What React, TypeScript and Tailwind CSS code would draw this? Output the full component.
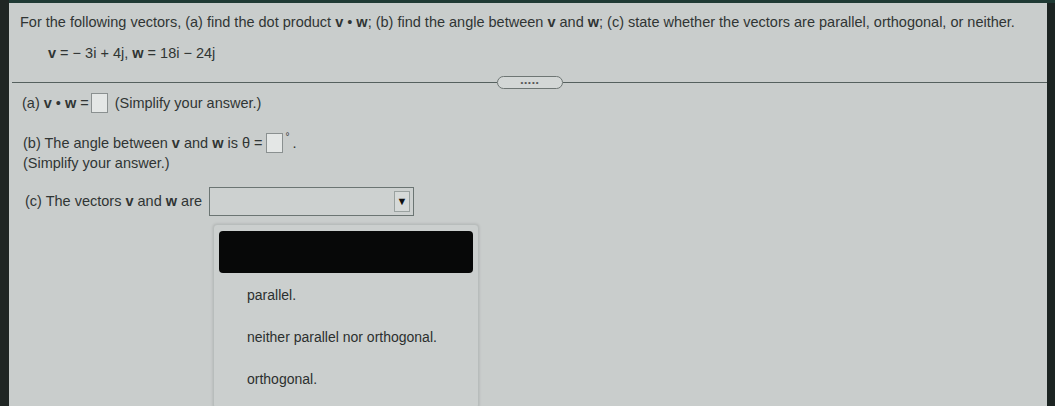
import React from 'react'

const font = { fontFamily: '"Liberation Sans", Arial, sans-serif' }

function AnswerBox({ className = '' }: { className?: string }) {
  return <span className={`inline-block w-[17px] h-[20px] border border-[#8a9090] bg-[#e4e7e6] align-middle ${className}`} />
}

export default function App() {
  const options = ['parallel.', 'neither parallel nor orthogonal.', 'orthogonal.']
  return (
    <div className="w-[1055px] h-[406px] overflow-hidden bg-[#1c2422] flex" style={font}>
      {/* left bezel */}
      <div className="w-[9px] shrink-0 bg-[#202624]" />
      <div className="flex-1 flex flex-col">
        <div className="h-[3px] bg-[#1f3a34]" />
        <div className="relative flex-1 bg-[#c9cdcc] text-[#303534] text-[14.5px] mr-[8px]">
          <div className="pl-[11px] pt-[11px] leading-[16px] whitespace-nowrap">
            For the following vectors, (a) find the dot product <b>v</b> • <b>w</b>; (b) find the angle between <b>v</b> and <b>w</b>; (c) state whether the vectors are parallel, orthogonal, or neither.
          </div>
          <div className="pl-[39px] pt-[15px] leading-[16px]">
            <b>v</b> = − 3i + 4j, <b>w</b> = 18i − 24j
          </div>

          {/* divider with pill */}
          <div className="flex items-center mt-[15px] pl-[3px]">
            <div className="w-[485px] h-[1px] bg-[#55605e]" />
            <div className="w-[66px] h-[13px] rounded-full border border-[#6e7674] bg-[#d3d7d6] flex items-center justify-center text-[8px] leading-none tracking-[1px] text-[#555]">
              •••••
            </div>
            <div className="flex-1 h-[1px] bg-[#55605e]" />
          </div>

          <div className="pl-[13px] pt-[4px] flex items-center gap-[2px] leading-[16px]">
            <span>(a) <b>v</b> • <b>w</b> =</span>
            <AnswerBox />
            <span className="ml-[5px]">(Simplify your answer.)</span>
          </div>

          <div className="pl-[14px] pt-[20px] leading-[18px]">
            <div className="flex items-center gap-[3px]">
              <span>(b) The angle between <b>v</b> and <b>w</b> is θ =</span>
              <AnswerBox />
              <span className="self-start text-[10px] leading-[10px] -mt-[1px]">°</span>
              <span>.</span>
            </div>
            <div className="mt-[1px]">(Simplify your answer.)</div>
          </div>

          <div className="pl-[16px] pt-[15px] flex items-center gap-[7px]">
            <span>(c) The vectors <b>v</b> and <b>w</b> are</span>
            <div className="w-[205px] h-[29px] border border-[#6b7573] bg-[#cdd1d0] flex items-center justify-end pr-[3px]">
              <div className="w-[16px] h-[21px] bg-[#d6dad9] border border-[#9aa2a0] flex items-center justify-center text-[11px] text-[#111]">▼</div>
            </div>
          </div>

          {/* dropdown panel */}
          <div className="absolute left-[204px] top-[221px] w-[266px] h-[185px] rounded-[4px] border border-[#b8bdbc] bg-[#cbcfce] shadow-[0_0_3px_rgba(0,0,0,0.15)] flex flex-col">
            <div className="mx-[5px] mt-[6px] h-[42px] rounded-[4px] bg-[#070808]" />
            <div className="flex flex-col pl-[33px] pt-[13px] gap-[23px] text-[14px] leading-[19px] text-[#2b2f2e]">
              {options.map(o => (
                <div key={o}>{o}</div>
              ))}
            </div>
          </div>
        </div>
      </div>
    </div>
  )
}
